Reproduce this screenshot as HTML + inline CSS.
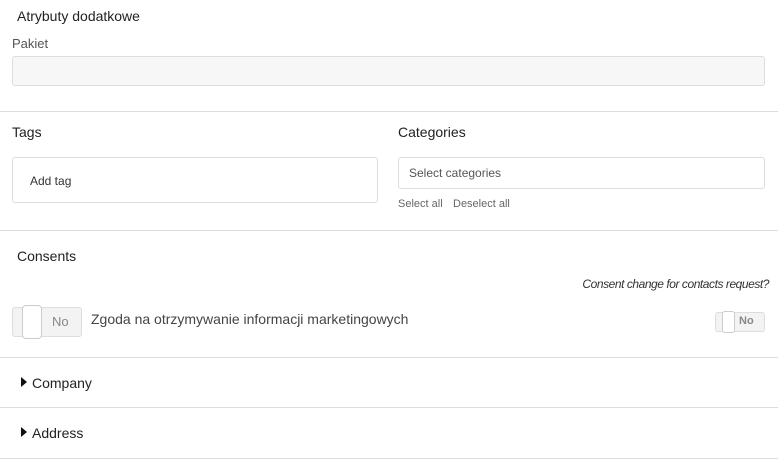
<!DOCTYPE html>
<html><head><style>
body{margin:0;width:778px;height:462px;background:#fff;font-family:"Liberation Sans",sans-serif;position:relative;overflow:hidden;color:#333}
.a{position:absolute;white-space:nowrap}
.hr{position:absolute;left:0;width:778px;height:1px;background:#ddd}
.box{position:absolute;border:1px solid #ddd;border-radius:3px;box-sizing:border-box;background:#fff}
.tri{position:absolute;width:0;height:0;border-left:6px solid #111;border-top:5px solid transparent;border-bottom:5px solid transparent}
</style></head><body>
<div class="a" style="left:17px;top:8px;font-size:14px;color:#222">Atrybuty dodatkowe</div>
<div class="a" style="left:12px;top:36px;font-size:13px;color:#555">Pakiet</div>
<div class="box" style="left:12px;top:56px;width:753px;height:30px;background:#f7f7f7"></div>
<div class="hr" style="top:111px"></div>
<div class="a" style="left:12px;top:124px;font-size:14px;color:#222">Tags</div>
<div class="box" style="left:12px;top:157px;width:366px;height:46px"></div>
<div class="a" style="left:30px;top:174px;font-size:12px;color:#333">Add tag</div>
<div class="a" style="left:398px;top:124px;font-size:14px;color:#222">Categories</div>
<div class="box" style="left:398px;top:157px;width:367px;height:32px"></div>
<div class="a" style="left:409px;top:166px;font-size:12px;color:#555">Select categories</div>
<div class="a" style="left:398px;top:198px;font-size:11px;color:#666">Select all</div>
<div class="a" style="left:453px;top:198px;font-size:11px;color:#666">Deselect all</div>
<div class="hr" style="top:230px"></div>
<div class="a" style="left:17px;top:248px;font-size:14px;color:#222">Consents</div>
<div class="a" style="right:9px;top:277px;font-size:12px;font-style:italic;color:#333;letter-spacing:-0.45px">Consent change for contacts request?</div>
<div class="box" style="left:12px;top:307px;width:70px;height:30px;background:#f3f3f3"></div>
<div class="a" style="left:52px;top:314px;font-size:13px;color:#888">No</div>
<div class="box" style="left:22px;top:305px;width:20px;height:34px;border-radius:4px;border-color:#ccc"></div>
<div class="a" style="left:91px;top:311px;font-size:14px;color:#444">Zgoda na otrzymywanie informacji marketingowych</div>
<div class="box" style="left:715px;top:312px;width:50px;height:20px;background:#f3f3f3"></div>
<div class="a" style="left:739px;top:315px;font-size:11px;font-weight:bold;color:#888">No</div>
<div class="box" style="left:722px;top:311px;width:13px;height:22px;border-radius:3px;border-color:#ccc"></div>
<div class="hr" style="top:357px"></div>
<div class="tri" style="left:21px;top:377px"></div>
<div class="a" style="left:32px;top:375px;font-size:14px;color:#222">Company</div>
<div class="hr" style="top:407px"></div>
<div class="tri" style="left:21px;top:427px"></div>
<div class="a" style="left:32px;top:425px;font-size:14px;color:#222">Address</div>
<div class="hr" style="top:458px"></div>
</body></html>
